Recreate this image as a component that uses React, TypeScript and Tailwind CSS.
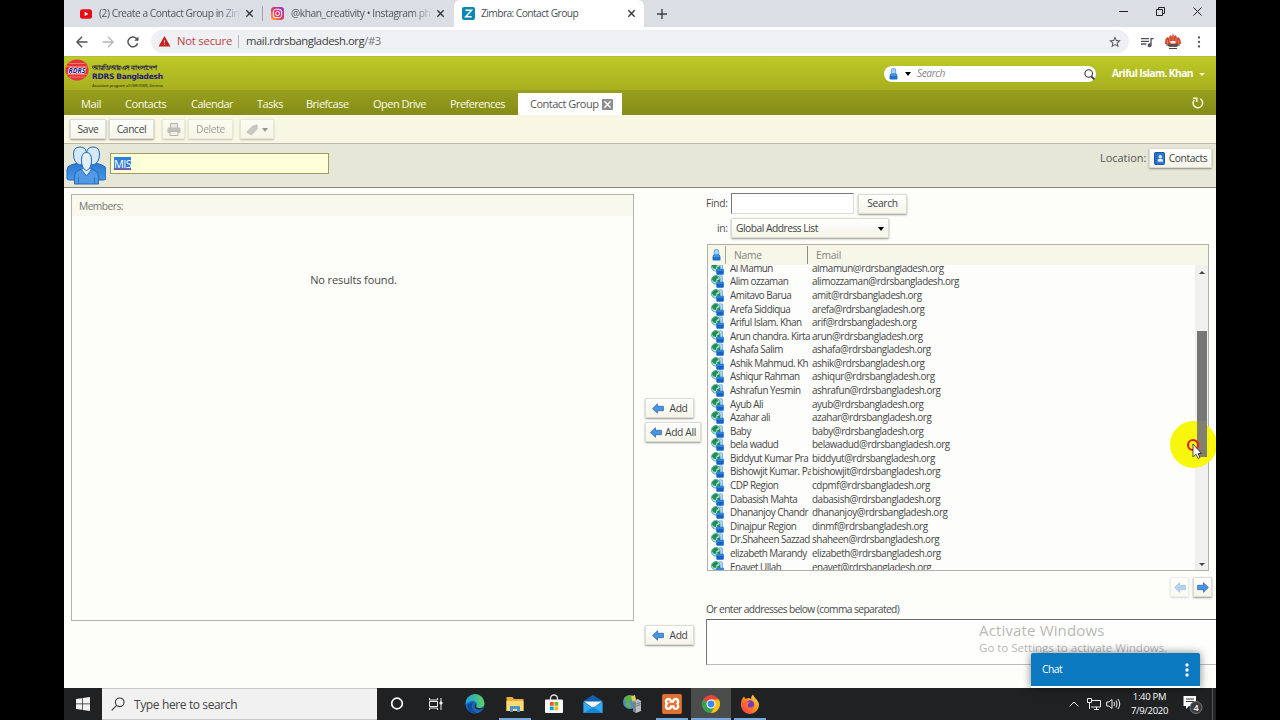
import type { ReactNode } from "react";
import { MdOutlineQueueMusic, MdStarOutline, MdWarning } from "react-icons/md";
import { SiXampp } from "react-icons/si";

const contacts: [string, string][] = [
  ["Al Mamun", "almamun"],
  ["Alim ozzaman", "alimozzaman"],
  ["Amitavo Barua", "amit"],
  ["Arefa Siddiqua", "arefa"],
  ["Ariful Islam. Khan", "arif"],
  ["Arun chandra. Kirta", "arun"],
  ["Ashafa Salim", "ashafa"],
  ["Ashik Mahmud. Kh", "ashik"],
  ["Ashiqur Rahman", "ashiqur"],
  ["Ashrafun Yesmin", "ashrafun"],
  ["Ayub Ali", "ayub"],
  ["Azahar ali", "azahar"],
  ["Baby", "baby"],
  ["bela wadud", "belawadud"],
  ["Biddyut Kumar Pra", "biddyut"],
  ["Bishowjit Kumar. Pa", "bishowjit"],
  ["CDP Region", "cdpmf"],
  ["Dabasish Mahta", "dabasish"],
  ["Dhananjoy Chandr", "dhananjoy"],
  ["Dinajpur Region", "dinmf"],
  ["Dr.Shaheen Sazzad", "shaheen"],
  ["elizabeth Marandy", "elizabeth"],
  ["Enayet Ullah", "enayet"],
];

function Cross({ className }: { className: string }) {
  return (
    <svg viewBox="0 0 10 10" className={className} fill="none" stroke="currentColor" strokeWidth="1.5">
      <path d="M1.5 1.5 8.5 8.5M8.5 1.5 1.5 8.5" />
    </svg>
  );
}

function Caret({ className }: { className: string }) {
  return (
    <svg viewBox="0 0 8 5" preserveAspectRatio="none" className={className} fill="currentColor">
      <path d="M0 0h8L4 5z" />
    </svg>
  );
}

function PersonIcon({ className }: { className: string }) {
  return (
    <svg viewBox="0 0 10 13" className={className}>
      <rect x="2.6" y="0.5" width="4.8" height="6.5" rx="1.6" fill="#a9d2f7" stroke="#4b8fd6" strokeWidth="0.8" />
      <path d="M.6 8.600Q.6 6 3 6h4Q9.400 6 9.400 8.600V11.500Q9.400 12.500 8.400 12.500H1.600Q.6 12.500.6 11.500Z" fill="#1f6fcd" />
      <path d="M1.300 8.500Q1.500 6.800 3 6.800h4Q8.500 6.800 8.700 8.500Z" fill="#5ba0ea" />
    </svg>
  );
}

function GlobePersonIcon() {
  return (
    <svg viewBox="0 0 13 13" className="h-[13px] w-[13px]">
      <rect x="7.300" y=".8" width="4.200" height="7" rx="1" fill="#b4d9f6" stroke="#5c9fdc" strokeWidth=".7" />
      <circle cx="4.800" cy="4.800" r="4.300" fill="#b5dfe4" stroke="#3b9a9a" strokeWidth=".8" />
      <path d="M.8 4Q2.500.6 6 .8L7.500 3 5.500 4 5 7 2.500 6.500ZM6 5.500 9 4v3L7 8.500Z" fill="#1f8f4b" />
      <rect x="5.300" y="6.700" width="7.500" height="6" rx="1" fill="#1265c8" />
      <path d="M6 8h6.200" stroke="#4b97e4" strokeWidth="1.200" />
    </svg>
  );
}

function Arrow({ className }: { className: string }) {
  return (
    <svg viewBox="0 0 13 12" className={className}>
      <path d="M.6 6 6 .8V3.600h6.400v4.800H6v2.800Z" fill="#4a94e4" stroke="#2c66a8" strokeWidth=".8" strokeLinejoin="round" />
    </svg>
  );
}

function Btn({ children, className = "" }: { children?: ReactNode; className?: string }) {
  return (
    <button
      className={`flex h-5 shrink-0 items-center justify-center whitespace-nowrap rounded-[1px] border border-[#dcdcd2] bg-gradient-to-b from-white to-[#f5f5e9] pt-px text-[10.250px] tracking-[-0.350px] text-[#444] shadow-[0_1px_2px_rgba(0,0,0,0.4)] ${className}`}
    >
      {children}
    </button>
  );
}

function TabStrip() {
  return (
    <div className="flex h-[27px] shrink-0 bg-[#dcdee6] text-[10.250px] tracking-[-0.580px] text-[#4c4f55]">
      <div className="flex w-[198px] items-center pl-4">
        <svg viewBox="0 0 12 10" className="h-[10px] w-3 shrink-0">
          <rect width="12" height="9.500" y=".2" rx="2.500" fill="#e60d14" />
          <path d="M4.700 2.700v4.400L8.400 4.900z" fill="#fff" />
        </svg>
        <span className="ml-[7px] w-[142px] overflow-hidden whitespace-nowrap bg-gradient-to-r from-[#4c4f55] from-85% to-[#dcdee6] bg-clip-text tracking-[-0.480px] text-transparent">
          (2) Create a Contact Group in Zin
        </span>
        <Cross className="ml-[4px] h-[9px] w-[9px] text-[#33363b]" />
      </div>
      <div className="my-[6px] w-px bg-[#a0a3aa]" />
      <div className="flex w-[191px] items-center pl-2">
        <svg viewBox="0 0 13 13" className="h-[13px] w-[13px] shrink-0">
          <defs>
            <linearGradient id="ig" x1="0" y1="1" x2="1" y2="0">
              <stop offset="0" stopColor="#fdb32b" />
              <stop offset=".45" stopColor="#ee3560" />
              <stop offset="1" stopColor="#8a35d0" />
            </linearGradient>
          </defs>
          <rect width="13" height="13" rx="3.200" fill="url(#ig)" />
          <rect x="2.300" y="2.300" width="8.400" height="8.400" rx="2.400" fill="none" stroke="#fff" strokeWidth="1" />
          <circle cx="6.500" cy="6.500" r="2" fill="none" stroke="#fff" strokeWidth="1" />
          <circle cx="9" cy="4" r=".6" fill="#fff" />
        </svg>
        <span className="ml-[7px] w-[142px] overflow-hidden whitespace-nowrap bg-gradient-to-r from-[#4c4f55] from-85% to-[#dcdee6] bg-clip-text tracking-[-0.450px] text-transparent">
          @khan_creativity • Instagram ph
        </span>
        <Cross className="ml-[3px] h-[9px] w-[9px] text-[#33363b]" />
      </div>
      <div className="flex w-[190px] items-center rounded-t-[6px] bg-white pl-2">
        <svg viewBox="0 0 13 13" className="h-[13px] w-[13px] shrink-0">
          <rect width="13" height="13" rx="2" fill="#0b87b5" />
          <path d="M3.500 3.300h6L3.700 9.700h6" fill="none" stroke="#fff" strokeWidth="1.500" />
        </svg>
        <span className="ml-[6px] w-[146px] whitespace-nowrap">Zimbra: Contact Group</span>
        <Cross className="h-[9px] w-[9px] text-[#33363b]" />
      </div>
      <div className="flex flex-1 items-center pl-[13px]">
        <svg viewBox="0 0 10 10" className="h-[10px] w-[10px]" stroke="#3c4043" strokeWidth="1.400">
          <path d="M5 0v10M0 5h10" />
        </svg>
      </div>
      <div className="mr-[14px] flex h-[23px] items-center gap-7 text-[#222]">
        <svg viewBox="0 0 9 9" className="h-[9px] w-[9px]" stroke="currentColor"><path d="M0 4.500h9" /></svg>
        <svg viewBox="0 0 9 9" className="h-[9px] w-[9px]" fill="none" stroke="currentColor">
          <path d="M.5 2.500h6v6h-6zM2.500 2.500v-2h6v6h-2" />
        </svg>
        <svg viewBox="0 0 9 9" className="h-[9px] w-[9px]" stroke="currentColor"><path d="m.5.5 8 8m0-8-8 8" /></svg>
      </div>
    </div>
  );
}

function AddressBar() {
  return (
    <div className="flex h-[29px] shrink-0 items-center bg-white pl-[12px]">
      <svg viewBox="0 0 12 12" className="h-3 w-3" fill="none" stroke="#505357" strokeWidth="1.400">
        <path d="M11.500 6H1M6 .8.9 6 6 11.200" />
      </svg>
      <svg viewBox="0 0 12 12" className="ml-[14px] h-3 w-3" fill="none" stroke="#b4b6ba" strokeWidth="1.300">
        <path d="M.5 6H11M6 .8 11.100 6 6 11.200" />
      </svg>
      <svg viewBox="0 0 12 12" className="ml-[13px] h-3 w-3" fill="none" stroke="#505357" strokeWidth="1.500">
        <path d="M10.600 7.300A4.900 4.900 0 1 1 9.300 2.400L10.800 4" />
        <path d="M11.500.5v4.300H7.200z" fill="#505357" stroke="none" />
      </svg>
      <div className="ml-[12px] flex h-[23px] w-[978px] items-center rounded-full bg-[#eff0f4] pl-[7px] text-[11.250px] tracking-[-0.420px]">
        <MdWarning className="h-[13px] w-[13px] text-[#c5221f]" />
        <span className="ml-[6px] w-[54px] whitespace-nowrap text-[11.250px] tracking-[-0.200px] text-[#c0413d]">Not secure</span>
        <span className="mx-[7px] h-[13px] w-px bg-[#b5b8bd]" />
        <span className="flex-1 text-[#3b3d41]">
          mail.rdrsbangladesh.org<span className="text-[#707378]">/#3</span>
        </span>
        <MdStarOutline className="mr-[7px] h-[14px] w-[14px] text-[#505357]" />
      </div>
      <MdOutlineQueueMusic className="ml-[10px] h-[16px] w-[16px] text-[#505357]" />
      <svg viewBox="0 0 16 17" className="ml-[10px] h-[17px] w-4">
        <path d="M0 11 .5 6l2-2 1.500 1 1-3 2 1.500L8 0l1 3.500L11 2l1 3 1.500-1 2 3 .5 4Z" fill="#d3492b" />
        <path d="M2.500 11V7M5 10V5M8 8V3M11 10V5M13.500 11V7" stroke="#f2a48e" strokeWidth=".5" />
        <path d="M2 11h12l-2 3H4z" fill="#7a5a58" />
        <rect x="5.500" y="8" width="5" height="2.500" fill="#eee" />
        <path d="M1 12h14M4 15.500h8" stroke="#444" strokeWidth="1" />
      </svg>
      <svg viewBox="0 0 4 12" className="ml-[16px] h-3 w-1" fill="#505357">
        <circle cx="2" cy="1.500" r="1.150" /><circle cx="2" cy="6" r="1.150" /><circle cx="2" cy="10.500" r="1.150" />
      </svg>
    </div>
  );
}

function Header() {
  return (
    <div className="flex h-[34px] shrink-0 border-t border-[#b3bb42] bg-gradient-to-b from-[#bdca26] to-[#a7af20]">
      <svg viewBox="0 0 24 22" className="ml-px mt-[2px] h-[22px] w-6 shrink-0">
        <ellipse cx="12" cy="11" rx="11.500" ry="10.500" fill="#e5343c" />
        <path d="M4 4.500h16M1.500 7.500h21M1.500 15.500h21M4 18h16" stroke="#f49a72" strokeWidth=".7" />
        <text x="12" y="14" textAnchor="middle" fontSize="7" fontWeight="700" fontStyle="italic" textLength="17" lengthAdjust="spacingAndGlyphs" fill="#1d1a8e" stroke="#fff" strokeWidth="1.200" paintOrder="stroke">RDRS</text>
      </svg>
      <div className="ml-[3px] flex w-[76px] shrink-0 flex-col pt-[6px] text-[#2a2348]">
        <div className="h-[9px] whitespace-nowrap text-[7.400px] font-bold leading-[9px] tracking-[-0.450px]">আরডিআরএস বাংলাদেশ</div>
        <div className="h-[9px] whitespace-nowrap font-['DejaVu_Sans'] text-[7.500px] font-bold leading-[9px] tracking-[-0.300px] text-[#25167a]">RDRS Bangladesh</div>
        <div className="mt-[2px] whitespace-nowrap text-[4px] font-semibold leading-[5px] tracking-[-0.180px] text-[#444718]">Associate program of LWF/DWS, Geneva</div>
      </div>
      <div className="ml-auto mt-[9px] flex h-4 w-[212px] items-center rounded-full bg-white pl-[5px]">
        <PersonIcon className="h-[12px] w-[9px]" />
        <Caret className="ml-[7px] h-1 w-[6px] text-black" />
        <span className="ml-[6px] flex-1 text-[10.250px] italic tracking-[-0.450px] text-[#888]">Search</span>
        <svg viewBox="0 0 11 11" className="mr-px h-[11px] w-[11px]" fill="none" stroke="#333">
          <circle cx="4.700" cy="4.500" r="3.800" strokeWidth="1.100" /><path d="m7.300 7.300 3 3" strokeWidth="1.800" />
        </svg>
      </div>
      <div className="ml-[16px] mt-[9px] flex h-4 w-[87px] items-center whitespace-nowrap text-[10.250px] font-bold tracking-[-0.570px] text-white">Ariful Islam. Khan</div>
      <Caret className="mr-[11px] mt-4 h-[3px] w-[6px] text-[#f1f4c4]" />
    </div>
  );
}

function Nav() {
  const item = "shrink-0 whitespace-nowrap leading-[27px]";
  return (
    <div className="flex h-[25px] shrink-0 bg-gradient-to-b from-[#98a01d] to-[#858c18] pl-[17px] text-[11px] tracking-[-0.500px] text-[#fbfbea]">
      <span className={`${item} w-[44px] tracking-[-0.350px]`}>Mail</span>
      <span className={`${item} w-[66px] tracking-[-0.420px]`}>Contacts</span>
      <span className={`${item} w-[66px]`}>Calendar</span>
      <span className={`${item} w-[49px]`}>Tasks</span>
      <span className={`${item} w-[67px]`}>Briefcase</span>
      <span className={`${item} w-[77px]`}>Open Drive</span>
      <span className={`${item} w-[68px] tracking-[-0.570px]`}>Preferences</span>
      <div className="mt-[3px] flex h-[22px] w-[104px] items-center bg-white pl-[12px] text-[#555]">
        <span className="w-[72px] whitespace-nowrap">Contact Group</span>
        <span className="flex h-[11px] w-[11px] items-center justify-center rounded-[1px] bg-[#8c8c8c] text-white">
          <Cross className="h-[9px] w-[9px]" />
        </span>
      </div>
      <svg viewBox="0 0 12 12" className="ml-auto mr-[12px] mt-[7px] h-3 w-3" fill="none" stroke="#f6f7dc" strokeWidth="1.500">
        <path d="M8.300 1.800A4.800 4.800 0 1 1 2.300 2.700" /><path d="M1 1.200h3.800V5" />
      </svg>
    </div>
  );
}

function Toolbar() {
  return (
    <div className="flex h-[28px] shrink-0 items-center bg-[#f7f7e4] pl-[6px]">
      <Btn className="w-9">Save</Btn>
      <Btn className="ml-[3px] w-[45px] tracking-[-0.200px]">Cancel</Btn>
      <Btn className="ml-2 w-[23px] opacity-50">
        <svg viewBox="0 0 14 13" className="h-[13px] w-[14px]">
          <path d="M3.500 5V.5h7V5" fill="#ddd" stroke="#777" />
          <rect x=".5" y="4.500" width="13" height="5.500" rx="1" fill="#8a8a8a" />
          <path d="M3 8.500h8v4H3z" fill="#eee" stroke="#777" />
        </svg>
      </Btn>
      <Btn className="ml-[3px] w-[45px] tracking-[-0.300px] opacity-50">Delete</Btn>
      <Btn className="ml-[7px] w-[34px] gap-[4px] opacity-60">
        <svg viewBox="0 0 12 12" className="h-3 w-3">
          <path d="m.8 8.200 5.500-6 4.700-1.500.3 4-5.800 6.200z" fill="#aaa" stroke="#999" strokeWidth=".8" />
        </svg>
        <Caret className="h-1 w-[6px] text-[#555]" />
      </Btn>
    </div>
  );
}

function GroupHeader() {
  return (
    <div className="flex h-[45px] shrink-0 border-b border-t border-b-[#858578] border-t-[#b9b9ad] bg-[#e7e7d7]">
      <svg viewBox="0 0 40 39" className="ml-[2px] mt-[2px] h-[39px] w-10 shrink-0">
        <defs>
          <linearGradient id="suit" x1="0" y1="0" x2="0" y2="1">
            <stop offset="0" stopColor="#2b79d4" />
            <stop offset="1" stopColor="#4a95e4" />
          </linearGradient>
        </defs>
        <g stroke="#2469b2" strokeWidth="1">
          <path d="M1 33v-9q0-4 4-5l5-1.500h21l5 1.500q4 1 4 5v9q-1 1-3 1H4q-2 0-3-1Z" fill="url(#suit)" />
          <path d="M7.500 8Q7.500 1 14 1t6.500 7q0 9-6.500 11Q7.500 17 7.500 8Z" fill="#d4e8f9" />
          <path d="M20.500 8Q20.500 1 27 1t6.500 7q0 9-6.500 11-6.500-2-6.500-11Z" fill="#d4e8f9" />
          <path d="M8.500 38v-8q0-4.500 4-5.500l4.500-1.500h7l4.500 1.500q4 1 4 5.500v8Z" fill="#5199e4" />
          <path d="m15.500 23.500 5 6.500 5-6.500-2-1.500h-6z" fill="#e4f1fc" />
          <path d="M15.500 14Q15.500 6.500 20.500 6.500T25.500 14q0 9-5 10.500Q15.500 23 15.500 14Z" fill="#e2f0fb" />
        </g>
        <path d="M12.500 31v7M28.500 31v7" stroke="#2469b2" strokeWidth=".8" />
      </svg>
      <div className="ml-1 mt-[9px] flex h-[21px] w-[219px] items-center border border-[#9da05c] bg-[#ffffd9] pl-[3px]">
        <span className="bg-[#2f80dd] text-[11px] leading-[13px] tracking-[-0.600px] text-white underline decoration-[#a9416a] underline-offset-1">MIS</span>
      </div>
      <div className="ml-auto mt-[4px] flex h-5 items-center">
        <span className="w-[49px] whitespace-nowrap text-[11px] tracking-[-0.050px] text-[#555]">Location:</span>
        <Btn className="mr-[4px] w-[63px] gap-1 tracking-[-0.400px]">
          <svg viewBox="0 0 11 13" className="h-[13px] w-[11px]">
            <rect x=".5" y=".5" width="10" height="12" rx="1" fill="#2f78d0" stroke="#1c569f" />
            <path d="M2.200 0v13" stroke="#17488c" strokeDasharray="1 1" />
            <circle cx="6.300" cy="4.700" r="1.700" fill="#e0effd" /><path d="M3.700 9.700V7.500q2.600-1.500 5.200 0v2.200z" fill="#e0effd" />
          </svg>
          Contacts
        </Btn>
      </div>
    </div>
  );
}

function AddressList() {
  return (
    <div className="mt-[6px] flex h-[327px] w-[502px] flex-col border border-[#b0b1a6] bg-[#fdfdfb]">
      <div className="flex h-5 shrink-0 items-center bg-[#f6f6e9] text-[10.250px] tracking-[-0.200px] text-[#85857c]">
        <div className="flex h-[18px] w-[18px] items-center justify-center border-r border-[#a5a59b]"><PersonIcon className="h-[12px] w-[9px]" /></div>
        <div className="flex h-[18px] w-[82px] items-center border-r border-[#8c8c83] pl-[8px] pt-[2px]">Name</div>
        <div className="pl-2 pt-[2px]">Email</div>
      </div>
      <div className="flex min-h-0 flex-1">
        <div className="flex min-w-0 flex-1 flex-col overflow-hidden">
          <div className="-mt-[3.500px] flex flex-col">
            {contacts.map(([name, user]) => (
              <div key={user} className="flex h-[13.580px] shrink-0 items-center whitespace-nowrap text-[9.900px] leading-[13px] text-[#454545]">
                <span className="ml-[3px] shrink-0"><GlobePersonIcon /></span>
                <span className="ml-[6px] w-[81px] shrink-0 overflow-hidden tracking-[-0.500px]">{name}</span>
                <span className="ml-px tracking-[-0.430px]">{user}@rdrsbangladesh.org</span>
              </div>
            ))}
          </div>
        </div>
        <div className="flex w-[13px] flex-col items-center bg-[#f0f0f0] text-[#444]">
          <Caret className="mt-[6px] h-[3px] w-[6px] rotate-180" />
          <div className="mt-[57px] h-[126px] w-[10px] bg-[#777]" />
          <Caret className="mb-[4px] mt-auto h-[3px] w-[6px]" />
        </div>
      </div>
    </div>
  );
}

function Body() {
  return (
    <div className="relative flex h-[500px] shrink-0 bg-[#fdfdf9] text-[#4c4c4c]">
      <div className="ml-[7px] mt-[6px] h-[427px] w-[563px] shrink-0 border border-[#b3b3a8]">
        <div className="h-[21px] bg-[#f8f8ee] pl-[7px] text-[10.250px] leading-[23px] tracking-[-0.550px] text-[#77776f]">Members:</div>
        <div className="mt-[55px] pl-[2px] text-center text-[11px] leading-[18px] tracking-[-0.120px] text-[#484848]">No results found.</div>
      </div>
      <div className="ml-[11px] flex w-[61px] shrink-0 flex-col pt-[210px]">
        <Btn className="w-[49px] gap-[6px] tracking-[-0.100px]"><Arrow className="h-[11px] w-[12px]" />Add</Btn>
        <Btn className="mt-1 w-[56px] gap-[3px] tracking-[-0.300px]"><Arrow className="h-[11px] w-[12px]" />Add All</Btn>
        <Btn className="mt-[183px] w-[49px] gap-[6px] tracking-[-0.100px]"><Arrow className="h-[11px] w-[12px]" />Add</Btn>
      </div>
      <div className="flex min-w-0 flex-1 flex-col overflow-hidden pt-[5px]">
        <div className="flex h-[21px] shrink-0 items-center text-[10.250px] tracking-[-0.300px]">
          <span className="w-[25px] pt-px">Find:</span>
          <div className="h-[21px] w-[123px] border border-b-[#ddd] border-l-[#777] border-r-[#ddd] border-t-[#777] bg-white" />
          <Btn className="ml-[4px] w-[49px]">Search</Btn>
        </div>
        <div className="mt-[4px] flex h-5 shrink-0 items-center text-[10.250px] tracking-[-0.300px]">
          <span className="w-[25px] pl-[11px] pt-px">in:</span>
          <Btn className="w-[158px] justify-between! pl-[4px] pr-[4px] tracking-[-0.500px]!">
            Global Address List<Caret className="h-1 w-[6px] text-black" />
          </Btn>
        </div>
        <div className="ml-px"><AddressList /></div>
        <div className="mr-[4px] mt-[6px] flex h-5 shrink-0 justify-end gap-1">
          <Btn className="w-[19px] opacity-40"><Arrow className="h-[11px] w-[12px]" /></Btn>
          <Btn className="w-[19px]"><Arrow className="h-[11px] w-[12px] rotate-180" /></Btn>
        </div>
        <div className="mt-[3px] h-[17px] shrink-0 text-[10.250px] leading-[18px] tracking-[-0.600px]">Or enter addresses below (comma separated)</div>
        <div className="mt-[2px] h-[46px] shrink-0 border border-r-0 border-[#bbb] border-l-[#777] border-t-[#666] bg-[#fefefc]" />
      </div>
      <div className="pointer-events-none absolute left-[915px] top-[432px] whitespace-nowrap text-[#b8b8b6]">
        <div className="text-[15px] leading-[20px] tracking-[0.150px]">Activate Windows</div>
        <div className="text-[11.600px] leading-[16px] tracking-[-0.050px]">Go to Settings to activate Windows.</div>
      </div>
      <div className="absolute bottom-0 left-[967px] flex h-[35px] w-[169px] items-center justify-between rounded-t-[2px] border-b-2 border-white bg-[#0a79c0] pl-[11px] pr-[11px] text-[10.250px] tracking-[-0.450px] text-white shadow-[0_0_9px_rgba(0,0,0,0.5)]">
        <span className="pt-px">Chat</span>
        <svg viewBox="0 0 4 14" className="h-[14px] w-1" fill="#fff">
          <circle cx="2" cy="2" r="1.700" /><circle cx="2" cy="7" r="1.700" /><circle cx="2" cy="12" r="1.700" />
        </svg>
      </div>
      <div className="absolute left-[1106px] top-[233px] h-[47px] w-[46px] overflow-hidden">
        <div className="h-[47px] w-[47px] rounded-full bg-[#f7f700]/95" />
      </div>
      <div className="absolute left-[1133px] top-[233px] h-[36px] w-[10px] bg-[#82806c]" />
      <svg viewBox="0 0 16 22" className="absolute left-[1122px] top-[250px] h-[22px] w-4">
        <circle cx="7" cy="7" r="5" fill="none" stroke="#e02216" strokeWidth="2.200" />
        <path d="M7 6v13l3-2.800 2 4.300 2-1-2-4h3.500z" fill="#fff" stroke="#222" strokeWidth=".8" />
      </svg>
    </div>
  );
}

function TaskIcon({ children, state = "" }: { children: ReactNode; state?: string }) {
  return (
    <div className={`flex h-8 w-[39.300px] shrink-0 items-center justify-center ${state === "active" ? "bg-[#4b4c4c]" : ""}`}>
      <div className={`flex h-8 items-center justify-center border-b-2 pt-[2px] ${state ? "border-[#76a9dc]" : "border-transparent"} ${state === "active" ? "w-full" : "w-8"}`}>{children}</div>
    </div>
  );
}

function Taskbar() {
  const icon = "h-5 w-5";
  return (
    <div className="flex h-8 shrink-0 bg-[#202122] text-white">
      <div className="flex w-[38px] items-center justify-center">
        <svg viewBox="0 0 14 14" className="h-[14px] w-[14px]" fill="#f3f3f3">
          <path d="M0 2 6 1.200v5.400H0zM6.700 1.100 14 0v6.600H6.700zM0 7.300h6v5.400L0 12zM6.700 7.300H14V14l-7.300-1.100z" />
        </svg>
      </div>
      <div className="flex w-[275px] shrink-0 items-center border-y border-[#c8c8c8] bg-[#f1f1f1] pl-[9px]">
        <svg viewBox="0 0 14 14" className="h-[14px] w-[14px]" fill="none" stroke="#333" strokeWidth="1.100">
          <circle cx="8.700" cy="5.300" r="4.300" /><path d="M5.600 8.400.7 13.300" />
        </svg>
        <span className="ml-[9px] pt-px text-[12px] tracking-[-0.380px] text-[#444]">Type here to search</span>
      </div>
      <div className="flex flex-1">
        <TaskIcon><svg viewBox="0 0 20 20" className={icon}><circle cx="10" cy="9.500" r="5.300" fill="none" stroke="#fff" strokeWidth="1.700" /></svg></TaskIcon>
        <TaskIcon>
          <svg viewBox="0 0 20 20" className={icon} fill="none" stroke="#eee">
            <path d="M3.500 7.500h8v5h-8zM3.500 4v2h8V4M3.500 16v-2h8v2M15 4v12" /><path d="M14 8h2v2h-2z" fill="#fff" />
          </svg>
        </TaskIcon>
        <TaskIcon>
          <svg viewBox="0 0 20 20" className={icon}>
            <defs><linearGradient id="edge" x2="1"><stop stopColor="#1e9fe0" /><stop offset="1" stopColor="#5bd35a" /></linearGradient></defs>
            <circle cx="10" cy="10" r="9.500" fill="#1769bd" />
            <path d="M.5 10A9.500 9.500 0 0 1 19.500 9c0 4-3 5-6 5-2 0-3-1-2-2.500C13 8 9 6 6 7S1 10 .5 10Z" fill="url(#edge)" />
            <path d="M9 8.500C5 11 7 17 12 19 5 20 1 15 3 10Z" fill="#114c9c" />
            <path d="M10.500 10C9 12 9.500 15 13 15.500c2.500.300 4.500-.500 5.500-1.500 0-.8-3 .500-5.500 0-2-.5-2.500-1.500-1.500-3Z" fill="#202b3b" />
          </svg>
        </TaskIcon>
        <TaskIcon state="open">
          <svg viewBox="0 0 20 20" className={icon}>
            <path d="M1.500 3h6l1.500 2h9.500v12h-17z" fill="#e7ae38" /><path d="M1.500 7h17v10h-17z" fill="#ffdb75" />
            <path d="M5 12h10v6h-3v-3H8v3H5z" fill="#4a96cc" />
          </svg>
        </TaskIcon>
        <TaskIcon>
          <svg viewBox="0 0 20 20" className={icon}>
            <path d="M6.500 6V4Q7 1 10 1t3.500 3v2" fill="none" stroke="#ddd" strokeWidth="1.300" />
            <rect x="1" y="5.500" width="18" height="13.500" rx="1" fill="#f7f7f7" />
            <path d="M6 8h3.700v3.700H6z" fill="#f05125" /><path d="M10.500 8h3.700v3.700h-3.700z" fill="#7eb900" />
            <path d="M6 12.500h3.700v3.700H6z" fill="#00a3ee" /><path d="M10.500 12.500h3.700v3.700h-3.700z" fill="#ffb800" />
          </svg>
        </TaskIcon>
        <TaskIcon>
          <svg viewBox="0 0 20 20" className={icon}>
            <path d="M.5 7 10 1l9.500 6v12H.5z" fill="#1261b0" /><path d="M1 7.500h18L10 14z" fill="#f5f8fb" />
            <path d="M.5 8 10 14l9.500-6v11H.5z" fill="#31a9ec" /><path d="m.5 19 9.500-6 9.500 6z" fill="#1787d5" />
          </svg>
        </TaskIcon>
        <TaskIcon>
          <svg viewBox="0 0 20 20" className={icon}>
            <circle cx="8" cy="8" r="7" fill="#4a8ccc" /><path d="M2 4Q7-1 11 3L9 7 5 9Z" fill="#63ad45" />
            <path d="M9 2.500 13 1l1 6-3 2Z" fill="#dfcf44" /><path d="m3 9 5-1 1 5-3 1Z" fill="#68b34e" />
            <path d="m11 7 5-2 3 2v10l-5 2-3-2z" fill="#b7bcc0" /><path d="m11 7 3 1v11l-3-2z" fill="#7b8288" />
            <path d="m14.500 10 4-1.500M14.500 12l4-1.500" stroke="#6b7074" />
          </svg>
        </TaskIcon>
        <TaskIcon state="open">
          <span className="flex h-5 w-5 items-center justify-center rounded-[3px] bg-[linear-gradient(#fff,#fff)] bg-[length:16px_16px] bg-center bg-no-repeat">
            <SiXampp className="h-5 w-5 text-[#e0702f]" />
          </span>
        </TaskIcon>
        <TaskIcon state="active">
          <svg viewBox="0 0 20 20" className={icon}>
            <circle cx="10" cy="10" r="9" fill="#e7453a" />
            <path d="M10 10 2.200 5.500A9 9 0 0 0 10 19l3.900-6.800Z" fill="#35a352" />
            <path d="M10 5.500h7.800A9 9 0 0 1 10 19l3.900-6.700Z" fill="#fbc117" />
            <circle cx="10" cy="10" r="4.500" fill="#fff" /><circle cx="10" cy="10" r="3.400" fill="#4285f4" />
          </svg>
        </TaskIcon>
        <TaskIcon state="open">
          <svg viewBox="0 0 20 20" className={icon}>
            <defs><linearGradient id="fox" x1="1" y1="0" x2="0" y2="1"><stop stopColor="#ffe34b" /><stop offset=".5" stopColor="#ff8a20" /><stop offset="1" stopColor="#ed245c" /></linearGradient></defs>
            <path d="M2 5 4 2.500 5.500 5 8 4q2 0 3 1Q11 2 13 .5q1 3 4 5.500 3 4 1.500 7.500A9 9 0 0 1 1 12.500Q.5 8 2 5Z" fill="url(#fox)" />
            <circle cx="10" cy="10.500" r="4.200" fill="#713cc0" /><path d="M4 7.500q4-1 6 1L8 10q-1 3 2 3.500 3 0 4-2-1 5-6 4-4-2-4-8Z" fill="#ff6a32" />
          </svg>
        </TaskIcon>
      </div>
      <div className="flex items-center pr-[9px]">
        <svg viewBox="0 0 10 6" className="h-[6px] w-[10px]" fill="none" stroke="#eee"><path d="m.6 5.400 4.400-4.400 4.400 4.400" /></svg>
        <svg viewBox="0 0 14 12" className="ml-[8px] h-3 w-[14px]" fill="none" stroke="#eee"><path d="M4.500 2.500h9v6.500H4M7 11.500h5M9.500 9v2.500M.5.500h4v4h-4zM2.500 4.500V11" /></svg>
        <svg viewBox="0 0 15 12" className="ml-[5px] h-3 w-[15px]" fill="none" stroke="#eee">
          <path d="M.7 4h2L6 1.500v9L2.700 8h-2zM8 4q1 2 0 4M10 2.500q2.200 3.500 0 7M12 1q3.500 5 0 10" />
        </svg>
        <div className="ml-[9px] w-[39px] whitespace-nowrap text-center text-[9.500px] leading-[14px] tracking-[-0.300px]"><div>1:40 PM</div><div>7/9/2020</div></div>
        <svg viewBox="0 0 20 20" className="ml-[14px] h-5 w-5">
          <path d="M.5 2h12.500v10H6l-3 3v-3H.5z" fill="#fff" /><path d="M3 5h8M3 7.500h8" stroke="#333" />
          <circle cx="13" cy="13.500" r="6" fill="#3b3c3d" stroke="#777" />
          <text x="13" y="17" textAnchor="middle" fontSize="9" fontWeight="600" fill="#fff">4</text>
        </svg>
      </div>
      <div className="w-px bg-[#555]" /><div className="w-[3px]" />
    </div>
  );
}

export default function App() {
  return (
    <div className="flex h-[720px] w-[1280px] justify-center overflow-hidden bg-black font-['Open_Sans','Noto_Sans',sans-serif]">
      <div className="flex w-[1152px] flex-col overflow-hidden">
        <TabStrip />
        <AddressBar />
        <Header />
        <Nav />
        <Toolbar />
        <GroupHeader />
        <Body />
        <Taskbar />
      </div>
    </div>
  );
}
